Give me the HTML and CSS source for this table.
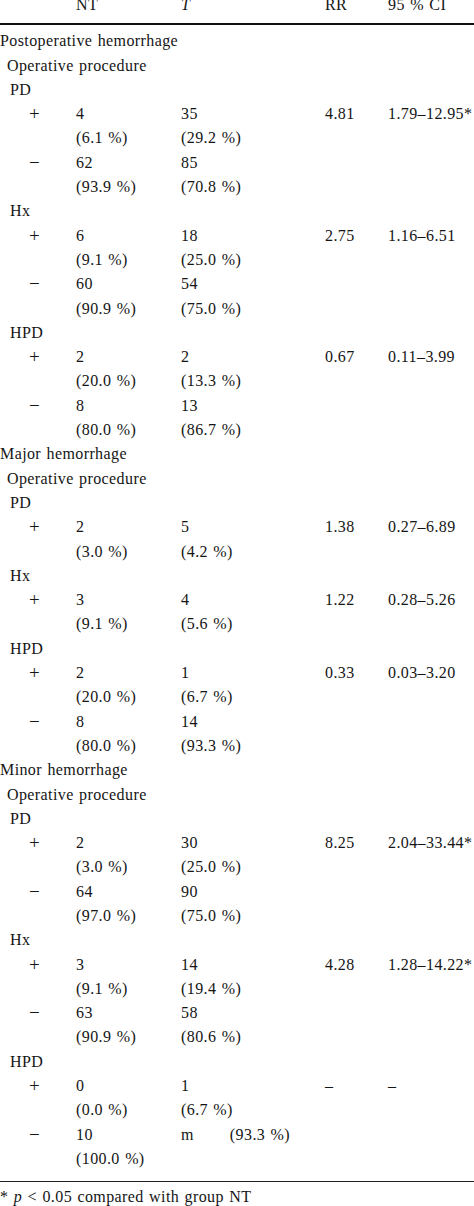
FILE: index.html
```html
<!DOCTYPE html>
<html>
<head>
<meta charset="utf-8">
<link rel="stylesheet" href="styles.css">
</head>
<body>
<div class="table">
  <div class="head row">
    <span></span><span>NT</span><span class="it">T</span><span>RR</span><span>95 % CI</span>
  </div>
  <div class="body">
    <div class="row"><span class="label l0">Postoperative hemorrhage</span></div>
    <div class="row"><span class="label l1">Operative procedure</span></div>
    <div class="row"><span class="label l2">PD</span></div>
    <div class="row"><span class="sign">+</span><span>4</span><span>35</span><span>4.81</span><span>1.79–12.95*</span></div>
    <div class="row"><span></span><span>(6.1 %)</span><span>(29.2 %)</span></div>
    <div class="row"><span class="sign">−</span><span>62</span><span>85</span></div>
    <div class="row"><span></span><span>(93.9 %)</span><span>(70.8 %)</span></div>
    <div class="row"><span class="label l2">Hx</span></div>
    <div class="row"><span class="sign">+</span><span>6</span><span>18</span><span>2.75</span><span>1.16–6.51</span></div>
    <div class="row"><span></span><span>(9.1 %)</span><span>(25.0 %)</span></div>
    <div class="row"><span class="sign">−</span><span>60</span><span>54</span></div>
    <div class="row"><span></span><span>(90.9 %)</span><span>(75.0 %)</span></div>
    <div class="row"><span class="label l2">HPD</span></div>
    <div class="row"><span class="sign">+</span><span>2</span><span>2</span><span>0.67</span><span>0.11–3.99</span></div>
    <div class="row"><span></span><span>(20.0 %)</span><span>(13.3 %)</span></div>
    <div class="row"><span class="sign">−</span><span>8</span><span>13</span></div>
    <div class="row"><span></span><span>(80.0 %)</span><span>(86.7 %)</span></div>
    <div class="row"><span class="label l0">Major hemorrhage</span></div>
    <div class="row"><span class="label l1">Operative procedure</span></div>
    <div class="row"><span class="label l2">PD</span></div>
    <div class="row"><span class="sign">+</span><span>2</span><span>5</span><span>1.38</span><span>0.27–6.89</span></div>
    <div class="row"><span></span><span>(3.0 %)</span><span>(4.2 %)</span></div>
    <div class="row"><span class="label l2">Hx</span></div>
    <div class="row"><span class="sign">+</span><span>3</span><span>4</span><span>1.22</span><span>0.28–5.26</span></div>
    <div class="row"><span></span><span>(9.1 %)</span><span>(5.6 %)</span></div>
    <div class="row"><span class="label l2">HPD</span></div>
    <div class="row"><span class="sign">+</span><span>2</span><span>1</span><span>0.33</span><span>0.03–3.20</span></div>
    <div class="row"><span></span><span>(20.0 %)</span><span>(6.7 %)</span></div>
    <div class="row"><span class="sign">−</span><span>8</span><span>14</span></div>
    <div class="row"><span></span><span>(80.0 %)</span><span>(93.3 %)</span></div>
    <div class="row"><span class="label l0">Minor hemorrhage</span></div>
    <div class="row"><span class="label l1">Operative procedure</span></div>
    <div class="row"><span class="label l2">PD</span></div>
    <div class="row"><span class="sign">+</span><span>2</span><span>30</span><span>8.25</span><span>2.04–33.44*</span></div>
    <div class="row"><span></span><span>(3.0 %)</span><span>(25.0 %)</span></div>
    <div class="row"><span class="sign">−</span><span>64</span><span>90</span></div>
    <div class="row"><span></span><span>(97.0 %)</span><span>(75.0 %)</span></div>
    <div class="row"><span class="label l2">Hx</span></div>
    <div class="row"><span class="sign">+</span><span>3</span><span>14</span><span>4.28</span><span>1.28–14.22*</span></div>
    <div class="row"><span></span><span>(9.1 %)</span><span>(19.4 %)</span></div>
    <div class="row"><span class="sign">−</span><span>63</span><span>58</span></div>
    <div class="row"><span></span><span>(90.9 %)</span><span>(80.6 %)</span></div>
    <div class="row"><span class="label l2">HPD</span></div>
    <div class="row"><span class="sign">+</span><span>0</span><span>1</span><span>–</span><span>–</span></div>
    <div class="row"><span></span><span>(0.0 %)</span><span>(6.7 %)</span></div>
    <div class="row"><span class="sign">−</span><span>10</span><span>m<span class="gap">(93.3 %)</span></span></div>
    <div class="row"><span></span><span>(100.0 %)</span></div>
  </div>
  <div class="foot">* <i>p</i> &lt; 0.05 compared with group NT</div>
</div>
</body>
</html>
```
FILE: styles.css
```css
html, body {
  margin: 0;
  padding: 0;
  background: #fff;
}
body {
  font-family: "Liberation Serif", "Times New Roman", serif;
  font-size: 16px;
  color: #151515;
  overflow: hidden;
}
.table {
  width: 474px;
}
.row {
  display: grid;
  grid-template-columns: 76px 105px 144px 63px 1fr;
  line-height: 24.3px;
  height: 24.3px;
  white-space: nowrap;
  letter-spacing: 0.4px;
  word-spacing: 1px;
}
.head {
  margin-top: -7px;
  padding-bottom: 6px;
  border-bottom: 2px solid #111;
}
.it {
  font-style: italic;
}
.body {
  padding-top: 4px;
  padding-bottom: 10px;
  border-bottom: 1px solid #222;
}
.label {
  grid-column: 1 / -1;
}
.l0 { padding-left: 0; }
.l1 { padding-left: 7px; }
.l2 { padding-left: 10px; }
.sign {
  padding-left: 29px;
  font-size: 19px;
  letter-spacing: 0;
}
.gap {
  margin-left: 36px;
}
.foot {
  padding-top: 3px;
  line-height: 24.3px;
  letter-spacing: 0.4px;
  word-spacing: 1px;
  white-space: nowrap;
}
```
